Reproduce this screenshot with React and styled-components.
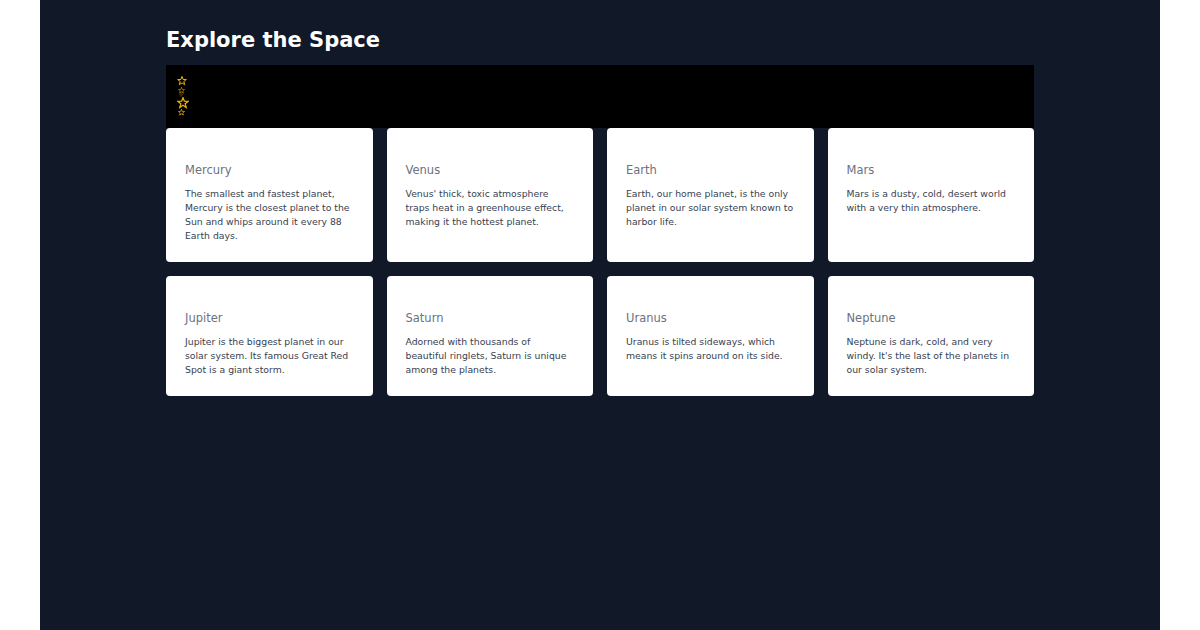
import React from "react";
import styled, { createGlobalStyle } from "styled-components";

const GlobalStyle = createGlobalStyle`
  html, body {
    margin: 0;
    padding: 0;
    background: #ffffff;
    font-family: "DejaVu Sans", "Liberation Sans", sans-serif;
  }
`;

const Page = styled.div`
  width: 1120px;
  min-height: 100vh;
  margin: 0 auto;
  background-color: #111827;
  box-sizing: border-box;
  padding: 27px 126px 40px;
`;

const Title = styled.h1`
  margin: 0 0 11px;
  font-size: 21px;
  line-height: 27px;
  font-weight: bold;
  color: #ffffff;
`;

const Sky = styled.div`
  position: relative;
  height: 63px;
  background-color: #000000;
  overflow: hidden;
`;

const StarIcon = styled.svg`
  position: absolute;
  display: block;
  opacity: ${(p) => p.$dim || 1};
`;

const Grid = styled.div`
  display: grid;
  grid-template-columns: repeat(4, 1fr);
  gap: 14px;
`;

const Card = styled.div`
  background-color: #ffffff;
  border-radius: 4px;
  padding: 33px 19px 19px;
`;

const CardTitle = styled.h3`
  margin: 0 0 8px;
  font-size: 11.5px;
  line-height: 18px;
  font-weight: normal;
  color: #6b7280;
`;

const CardText = styled.p`
  margin: 0;
  font-size: 9.3px;
  line-height: 14px;
  color: #374151;
`;

const planets = [
  {
    name: "Mercury",
    text: "The smallest and fastest planet, Mercury is the closest planet to the Sun and whips around it every 88 Earth days.",
  },
  {
    name: "Venus",
    text: "Venus' thick, toxic atmosphere traps heat in a greenhouse effect, making it the hottest planet.",
  },
  {
    name: "Earth",
    text: "Earth, our home planet, is the only planet in our solar system known to harbor life.",
  },
  {
    name: "Mars",
    text: "Mars is a dusty, cold, desert world with a very thin atmosphere.",
  },
  {
    name: "Jupiter",
    text: "Jupiter is the biggest planet in our solar system. Its famous Great Red Spot is a giant storm.",
  },
  {
    name: "Saturn",
    text: "Adorned with thousands of beautiful ringlets, Saturn is unique among the planets.",
  },
  {
    name: "Uranus",
    text: "Uranus is tilted sideways, which means it spins around on its side.",
  },
  {
    name: "Neptune",
    text: "Neptune is dark, cold, and very windy. It's the last of the planets in our solar system.",
  },
];

// stars scattered on the sky: centre x, centre y, size (px, relative to sky)
const stars = [
  { x: 16, y: 16, size: 10 },
  { x: 15, y: 25, size: 7, dim: 0.8 },
  { x: 14.5, y: 29.5, size: 4, dim: 0.6 },
  { x: 17, y: 38, size: 12 },
  { x: 15, y: 47, size: 7 },
];

const STAR_POINTS =
  "12,1 14.65,8.36 22.46,8.6 16.28,13.39 18.47,20.9 12,16.5 5.53,20.9 7.72,13.39 1.54,8.6 9.35,8.36";

const App = () => {
  return (
    <>
      <GlobalStyle />
      <Page>
        <Title>Explore the Space</Title>
        <Sky>
          {stars.map((s, i) => (
            <StarIcon
              key={i}
              $dim={s.dim}
              viewBox="0 0 24 24"
              width={s.size}
              height={s.size}
              style={{ left: s.x - s.size / 2, top: s.y - s.size / 2 }}
            >
              <polygon
                points={STAR_POINTS}
                fill="none"
                stroke="#f5b301"
                strokeWidth="2.4"
                strokeLinejoin="miter"
              />
            </StarIcon>
          ))}
        </Sky>
        <Grid>
          {planets.map((p) => (
            <Card key={p.name}>
              <CardTitle>{p.name}</CardTitle>
              <CardText>{p.text}</CardText>
            </Card>
          ))}
        </Grid>
      </Page>
    </>
  );
};

export default App;
